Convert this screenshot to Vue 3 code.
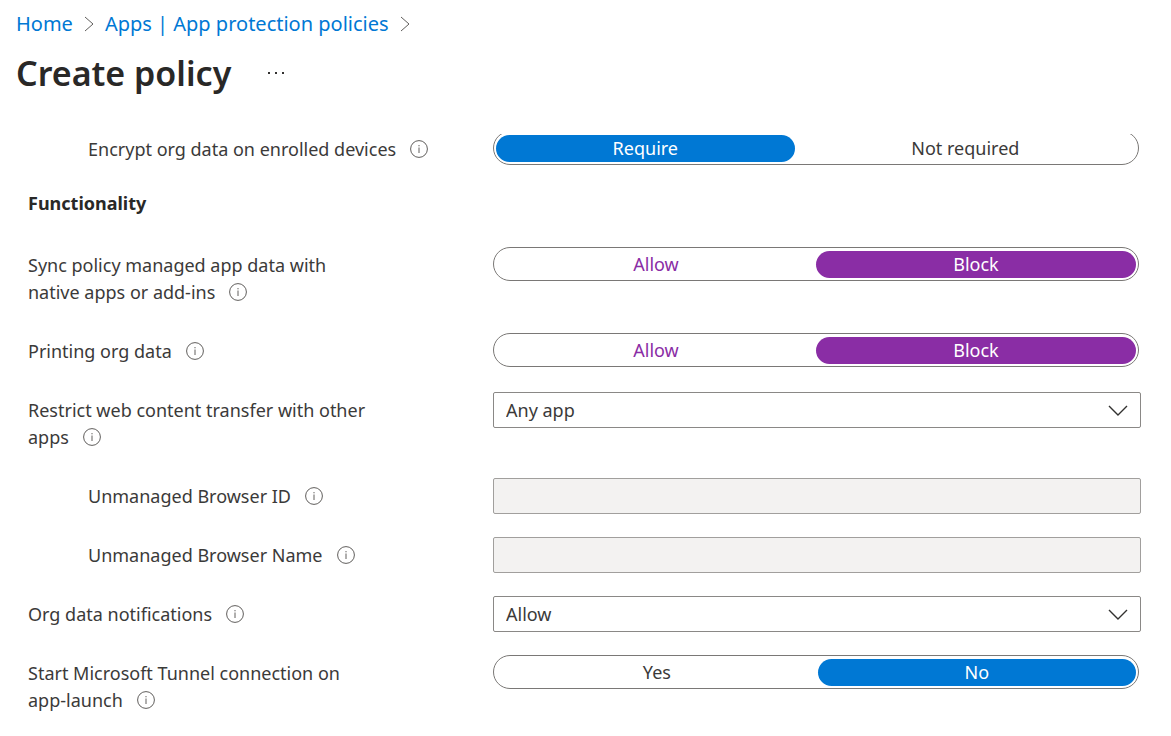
<template>
  <div class="blade">
    <nav class="breadcrumb" aria-label="Breadcrumb">
      <template v-for="crumb in crumbs" :key="crumb">
        <a href="#" @click.prevent>{{ crumb }}</a>
        <svg class="crumb-sep" viewBox="0 0 10 16" aria-hidden="true">
          <path d="M1 1l8 7-8 7" />
        </svg>
      </template>
    </nav>

    <header class="title-bar">
      <h1>Create policy</h1>
      <button class="more-btn" type="button" aria-label="More actions">
        <svg viewBox="0 0 18 4" aria-hidden="true">
          <rect x="1" y="1" width="2" height="2" />
          <rect x="8" y="1" width="2" height="2" />
          <rect x="15" y="1" width="2" height="2" />
        </svg>
      </button>
    </header>

    <main class="scroll-area">
      <form class="settings" @submit.prevent>
        <template v-for="row in rows" :key="row.id">
          <h2 v-if="row.type === 'heading'" class="section-title">{{ row.label }}</h2>

          <div v-else class="row" :class="{ nested: row.nested }">
            <div class="row-label">
              <label v-if="row.type !== 'toggle'" :for="row.id">{{ row.label }}</label>
              <span v-else :id="row.id + '-label'">{{ row.label }}</span>
              <svg class="info" viewBox="0 0 18 18" aria-hidden="true">
                <circle cx="9" cy="9" r="8.4" />
                <path d="M9 7.5v5.5M9 5v1.3" />
              </svg>
            </div>

            <div
              v-if="row.type === 'toggle'"
              class="toggle"
              :class="{ changed: row.changed }"
              role="radiogroup"
              :aria-labelledby="row.id + '-label'"
            >
              <label
                v-for="option in row.options"
                :key="option"
                class="option"
                :class="{ active: values[row.id] === option }"
              >
                <input v-model="values[row.id]" type="radio" :name="row.id" :value="option" />
                {{ option }}
              </label>
            </div>

            <div v-else-if="row.type === 'select'" class="select-box">
              <select :id="row.id" v-model="values[row.id]">
                <option v-for="option in row.options" :key="option">{{ option }}</option>
              </select>
              <svg class="chevron" viewBox="0 0 20 12" aria-hidden="true">
                <path d="M1 1l9 9 9-9" />
              </svg>
            </div>

            <input v-else :id="row.id" v-model="values[row.id]" class="text-box" type="text" disabled />
          </div>
        </template>
      </form>
    </main>
  </div>
</template>

<script setup>
import { reactive } from 'vue'

const crumbs = ['Home', 'Apps | App protection policies']

const rows = [
  { id: 'encrypt', type: 'toggle', label: 'Encrypt org data on enrolled devices', options: ['Require', 'Not required'], nested: true },
  { id: 'functionality', type: 'heading', label: 'Functionality' },
  { id: 'sync', type: 'toggle', label: 'Sync policy managed app data with native apps or add-ins', options: ['Allow', 'Block'], changed: true },
  { id: 'printing', type: 'toggle', label: 'Printing org data', options: ['Allow', 'Block'], changed: true },
  { id: 'webContent', type: 'select', label: 'Restrict web content transfer with other apps', options: ['Any app'] },
  { id: 'browserId', type: 'text', label: 'Unmanaged Browser ID', nested: true },
  { id: 'browserName', type: 'text', label: 'Unmanaged Browser Name', nested: true },
  { id: 'notifications', type: 'select', label: 'Org data notifications', options: ['Allow', 'Block org data', 'Block'] },
  { id: 'tunnel', type: 'toggle', label: 'Start Microsoft Tunnel connection on app-launch', options: ['Yes', 'No'] }
]

const values = reactive({
  encrypt: 'Require',
  sync: 'Block',
  printing: 'Block',
  webContent: 'Any app',
  browserId: '',
  browserName: '',
  notifications: 'Allow',
  tunnel: 'No'
})
</script>

<style>
body {
  margin: 0;
  background: #fff;
}
</style>

<style scoped>
.blade {
  color: #3b3a39;
  font-family: "Segoe UI", "Noto Sans", "Open Sans", sans-serif;
  font-size: 18px;
  line-height: 27px;
}

.breadcrumb {
  display: flex;
  align-items: center;
  gap: 11px;
  padding: 10px 16px 0;
  font-size: 20px;
}

.breadcrumb a {
  color: #0078d4;
  text-decoration: none;
}

.crumb-sep {
  width: 10px;
  height: 16px;
  fill: none;
  stroke: #605e5c;
}

.title-bar {
  display: flex;
  align-items: center;
  gap: 36px;
  height: 48px;
  padding: 12px 16px 37px;
}

h1 {
  margin: 0;
  color: #292827;
  font-size: 34px;
  font-weight: 600;
  line-height: 48px;
}

.more-btn {
  display: flex;
  padding: 0;
  background: none;
  border: none;
  cursor: pointer;
}

.more-btn svg {
  width: 18px;
  height: 4px;
  fill: #323130;
}

.scroll-area {
  overflow: hidden;
}

/* scrolled slightly past the first row's top edge */
.settings {
  margin-top: -3px;
  padding: 0 30px 0 28px;
}

.section-title {
  margin: 0;
  padding-bottom: 30px;
  color: #292827;
  font-size: 18px;
  font-weight: 700;
}

.row {
  display: flex;
  align-items: flex-start;
  min-height: 36px;
  margin-bottom: 23px;
}

.row-label {
  box-sizing: border-box;
  flex: 0 0 465px;
  padding: 5px 120px 4px 0;
}

.row-label label,
.row-label span {
  overflow-wrap: break-word;
}

.nested .row-label {
  padding-left: 60px;
  padding-right: 50px;
}

.info {
  width: 18px;
  height: 18px;
  margin-left: 14px;
  vertical-align: -2px;
  fill: none;
  stroke: #605e5c;
}

.toggle {
  display: flex;
  flex: 1;
  box-sizing: border-box;
  height: 34px;
  margin-right: 2px;
  padding: 3px 2px 2px;
  border: 1px solid #7a7876;
  border-radius: 17px;
}

.option {
  position: relative;
  flex: 1 1 auto;
  border-radius: 14px;
  text-align: center;
  cursor: pointer;
}

.option input {
  position: absolute;
  inset: 0;
  margin: 0;
  opacity: 0;
}

.changed .option {
  color: #8a2da5;
}

.option.active {
  background: #0078d4;
  color: #fff;
}

.changed .option.active {
  background: #8a2da5;
  color: #fff;
}

.select-box {
  position: relative;
  flex: 1;
}

select,
.text-box {
  display: block;
  box-sizing: border-box;
  width: 100%;
  height: 36px;
  margin: 0;
  padding: 0 12px;
  border: 1px solid #8a8886;
  border-radius: 2px;
  color: inherit;
  font: inherit;
}

select {
  appearance: none;
  background: #fff;
}

.text-box {
  flex: 1;
  width: auto;
  min-width: 0;
}

.text-box:disabled {
  background: #f3f2f1;
  border-color: #a19f9d;
}

.chevron {
  position: absolute;
  top: 13px;
  right: 13px;
  width: 20px;
  height: 12px;
  fill: none;
  stroke: #323130;
  stroke-width: 1.4;
  pointer-events: none;
}
</style>
